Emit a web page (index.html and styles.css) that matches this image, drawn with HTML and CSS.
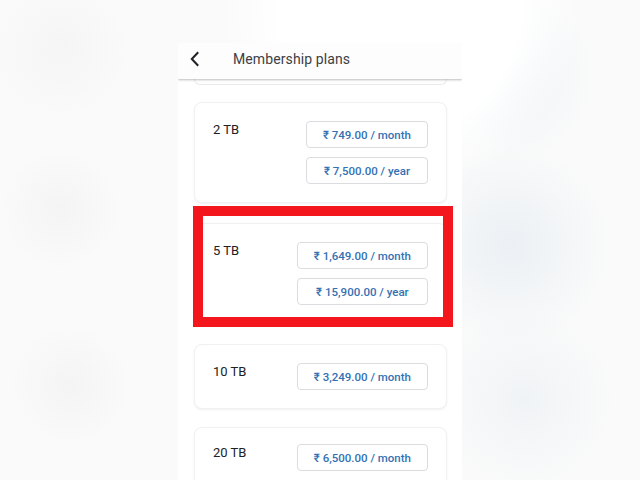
FILE: index.html
```html
<!DOCTYPE html>
<html lang="en">
<head>
<meta charset="utf-8">
<title>Membership plans</title>
<link rel="stylesheet" href="styles.css">
</head>
<body>
<div class="stage">
  <div class="phone">
    <header class="header">
      <svg class="back" width="10" height="16" viewBox="0 0 10 16" aria-hidden="true">
        <path d="M8.2 1.2 L1.8 8 L8.2 14.8" fill="none" stroke="#202124" stroke-width="2"/>
      </svg>
      <span class="title">Membership plans</span>
    </header>
    <div class="list">
      <div class="tail"></div>
      <div class="card">
        <span class="size">2 TB</span>
        <div class="prices">
          <span class="price">₹ 749.00 / month</span>
          <span class="price">₹ 7,500.00 / year</span>
        </div>
      </div>
      <div class="card highlighted">
        <span class="size">5 TB</span>
        <div class="prices">
          <span class="price">₹ 1,649.00 / month</span>
          <span class="price">₹ 15,900.00 / year</span>
        </div>
        <div class="mark"></div>
      </div>
      <div class="card">
        <span class="size">10 TB</span>
        <div class="prices">
          <span class="price">₹ 3,249.00 / month</span>
        </div>
      </div>
      <div class="card card-last">
        <span class="size">20 TB</span>
        <div class="prices">
          <span class="price">₹ 6,500.00 / month</span>
        </div>
      </div>
    </div>
  </div>
</div>
</body>
</html>
```

FILE: styles.css
```css
html, body {
  margin: 0;
  padding: 0;
}

body {
  width: 640px;
  height: 480px;
  overflow: hidden;
  font-family: Roboto, "Noto Sans", "Liberation Sans", sans-serif;
  background:
    radial-gradient(circle at 400px 10px, #ffffff 0, #ffffff 120px, rgba(255,255,255,0) 180px),
    radial-gradient(circle at 60px 210px, #f4f4f4 0, rgba(244,244,244,0) 60px),
    radial-gradient(circle at 70px 385px, #f4f4f4 0, rgba(244,244,244,0) 60px),
    radial-gradient(circle at 60px 50px, #f5f5f5 0, rgba(245,245,245,0) 70px),
    radial-gradient(circle at 505px 75px, #edf2f6 0, rgba(237,242,246,0) 90px),
    radial-gradient(circle at 510px 245px, #ebf0f4 0, rgba(235,240,244,0) 100px),
    radial-gradient(circle at 525px 400px, #f0f3f6 0, rgba(240,243,246,0) 90px),
    #fafafa;
}

.stage {
  display: flex;
  justify-content: center;
  align-items: flex-start;
  height: 480px;
}

.phone {
  width: 284px;
  height: 437px;
  margin-top: 43px;
  background: #ffffff;
  display: flex;
  flex-direction: column;
  overflow: hidden;
}

.header {
  flex: none;
  height: 36px;
  box-sizing: border-box;
  padding: 0 0 4px 12px;
  display: flex;
  align-items: center;
  background: #fdfdfd;
  box-shadow: 0 1px 2px rgba(60, 64, 67, 0.35);
  position: relative;
  z-index: 1;
}

.back {
  display: block;
  flex: none;
}

.title {
  margin-left: 33px;
  font-size: 14px;
  color: #3c4043;
  letter-spacing: 0.1px;
}

.list {
  flex: none;
  display: flex;
  flex-direction: column;
  gap: 20px;
  padding: 0 15px 0 16px;
}

.tail {
  flex: none;
  height: 5px;
  border: 1px solid #e8eaed;
  border-top: none;
  border-radius: 0 0 8px 8px;
  margin-bottom: -3px;
}

.card {
  flex: none;
  position: relative;
  display: flex;
  justify-content: space-between;
  align-items: flex-start;
  padding: 18px 18px 18px 18px;
  border: 1px solid #f0f1f2;
  border-radius: 8px;
  box-shadow: 0 1px 2px rgba(60, 64, 67, 0.08);
  background: #ffffff;
}

.card-last {
  margin-top: -2px;
  padding-top: 16px;
}

.size {
  font-size: 13px;
  line-height: 18px;
  color: #202124;
}

.prices {
  display: flex;
  flex-direction: column;
  gap: 9px;
}

.price {
  height: 27px;
  box-sizing: border-box;
  padding: 0 16px;
  display: flex;
  align-items: center;
  justify-content: center;
  border: 1px solid #dadce0;
  border-radius: 4px;
  font-size: 11.5px;
  font-weight: 500;
  color: #3471b3;
  white-space: nowrap;
}

.mark {
  position: absolute;
  left: -2px;
  top: -18px;
  width: 260px;
  height: 121px;
  box-sizing: border-box;
  border: 10.5px solid #f3161d;
  pointer-events: none;
}
```
